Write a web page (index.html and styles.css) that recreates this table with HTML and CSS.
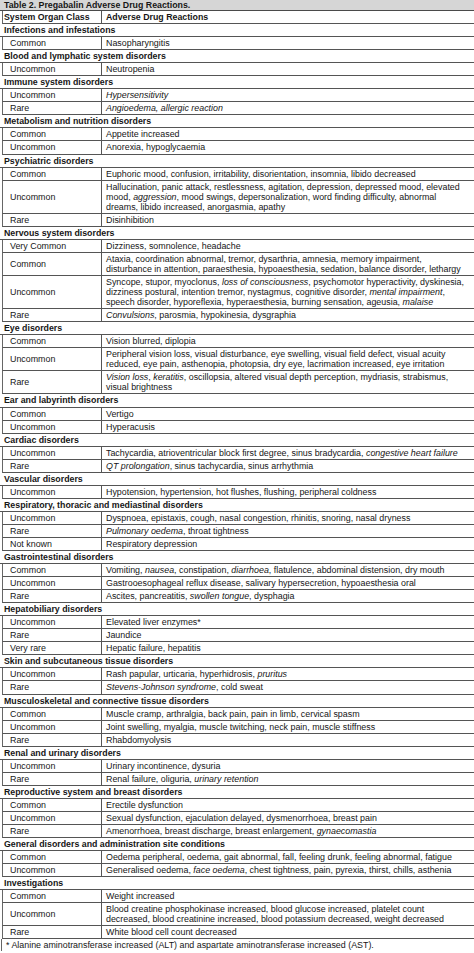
FILE: index.html
```html
<!DOCTYPE html>
<html lang="en">
<head>
<meta charset="utf-8">
<title>Table 2. Pregabalin Adverse Drug Reactions</title>
<link rel="stylesheet" href="styles.css">
</head>
<body>
<div class="table">
  <div class="title">Table 2. Pregabalin Adverse Drug Reactions.</div>
  <div class="row head"><div class="c1">System Organ Class</div><div class="c2">Adverse Drug Reactions</div></div>

  <div class="cat">Infections and infestations</div>
  <div class="row"><div class="c1">Common</div><div class="c2">Nasopharyngitis</div></div>

  <div class="cat">Blood and lymphatic system disorders</div>
  <div class="row"><div class="c1">Uncommon</div><div class="c2">Neutropenia</div></div>

  <div class="cat">Immune system disorders</div>
  <div class="row"><div class="c1">Uncommon</div><div class="c2"><i>Hypersensitivity</i></div></div>
  <div class="row"><div class="c1">Rare</div><div class="c2"><i>Angioedema, allergic reaction</i></div></div>

  <div class="cat">Metabolism and nutrition disorders</div>
  <div class="row"><div class="c1">Common</div><div class="c2">Appetite increased</div></div>
  <div class="row"><div class="c1">Uncommon</div><div class="c2">Anorexia, hypoglycaemia</div></div>

  <div class="cat">Psychiatric disorders</div>
  <div class="row"><div class="c1">Common</div><div class="c2">Euphoric mood, confusion, irritability, disorientation, insomnia, libido decreased</div></div>
  <div class="row"><div class="c1">Uncommon</div><div class="c2">Hallucination, panic attack, restlessness, agitation, depression, depressed mood, elevated<br>mood, <i>aggression</i>, mood swings, depersonalization, word finding difficulty, abnormal<br>dreams, libido increased, anorgasmia, apathy</div></div>
  <div class="row"><div class="c1">Rare</div><div class="c2">Disinhibition</div></div>

  <div class="cat">Nervous system disorders</div>
  <div class="row"><div class="c1">Very Common</div><div class="c2">Dizziness, somnolence, headache</div></div>
  <div class="row"><div class="c1">Common</div><div class="c2">Ataxia, coordination abnormal, tremor, dysarthria, amnesia, memory impairment,<br>disturbance in attention, paraesthesia, hypoaesthesia, sedation, balance disorder, lethargy</div></div>
  <div class="row"><div class="c1">Uncommon</div><div class="c2">Syncope, stupor, myoclonus, <i>loss of consciousness</i>, psychomotor hyperactivity, dyskinesia,<br>dizziness postural, intention tremor, nystagmus, cognitive disorder, <i>mental impairment</i>,<br>speech disorder, hyporeflexia, hyperaesthesia, burning sensation, ageusia, <i>malaise</i></div></div>
  <div class="row"><div class="c1">Rare</div><div class="c2"><i>Convulsions</i>, parosmia, hypokinesia, dysgraphia</div></div>

  <div class="cat">Eye disorders</div>
  <div class="row"><div class="c1">Common</div><div class="c2">Vision blurred, diplopia</div></div>
  <div class="row"><div class="c1">Uncommon</div><div class="c2">Peripheral vision loss, visual disturbance, eye swelling, visual field defect, visual acuity<br>reduced, eye pain, asthenopia, photopsia, dry eye, lacrimation increased, eye irritation</div></div>
  <div class="row"><div class="c1">Rare</div><div class="c2"><i>Vision loss</i>, <i>keratitis</i>, oscillopsia, altered visual depth perception, mydriasis, strabismus,<br>visual brightness</div></div>

  <div class="cat">Ear and labyrinth disorders</div>
  <div class="row"><div class="c1">Common</div><div class="c2">Vertigo</div></div>
  <div class="row"><div class="c1">Uncommon</div><div class="c2">Hyperacusis</div></div>

  <div class="cat">Cardiac disorders</div>
  <div class="row"><div class="c1">Uncommon</div><div class="c2">Tachycardia, atrioventricular block first degree, sinus bradycardia, <i>congestive heart failure</i></div></div>
  <div class="row"><div class="c1">Rare</div><div class="c2"><i>QT prolongation</i>, sinus tachycardia, sinus arrhythmia</div></div>

  <div class="cat">Vascular disorders</div>
  <div class="row"><div class="c1">Uncommon</div><div class="c2">Hypotension, hypertension, hot flushes, flushing, peripheral coldness</div></div>

  <div class="cat">Respiratory, thoracic and mediastinal disorders</div>
  <div class="row"><div class="c1">Uncommon</div><div class="c2">Dyspnoea, epistaxis, cough, nasal congestion, rhinitis, snoring, nasal dryness</div></div>
  <div class="row"><div class="c1">Rare</div><div class="c2"><i>Pulmonary oedema</i>, throat tightness</div></div>
  <div class="row"><div class="c1">Not known</div><div class="c2">Respiratory depression</div></div>

  <div class="cat">Gastrointestinal disorders</div>
  <div class="row"><div class="c1">Common</div><div class="c2">Vomiting, <i>nausea</i>, constipation, <i>diarrhoea</i>, flatulence, abdominal distension, dry mouth</div></div>
  <div class="row"><div class="c1">Uncommon</div><div class="c2">Gastrooesophageal reflux disease, salivary hypersecretion, hypoaesthesia oral</div></div>
  <div class="row"><div class="c1">Rare</div><div class="c2">Ascites, pancreatitis, <i>swollen tongue</i>, dysphagia</div></div>

  <div class="cat">Hepatobiliary disorders</div>
  <div class="row"><div class="c1">Uncommon</div><div class="c2">Elevated liver enzymes*</div></div>
  <div class="row"><div class="c1">Rare</div><div class="c2">Jaundice</div></div>
  <div class="row"><div class="c1">Very rare</div><div class="c2">Hepatic failure, hepatitis</div></div>

  <div class="cat">Skin and subcutaneous tissue disorders</div>
  <div class="row"><div class="c1">Uncommon</div><div class="c2">Rash papular, urticaria, hyperhidrosis, <i>pruritus</i></div></div>
  <div class="row"><div class="c1">Rare</div><div class="c2"><i>Stevens-Johnson syndrome</i>, cold sweat</div></div>

  <div class="cat">Musculoskeletal and connective tissue disorders</div>
  <div class="row"><div class="c1">Common</div><div class="c2">Muscle cramp, arthralgia, back pain, pain in limb, cervical spasm</div></div>
  <div class="row"><div class="c1">Uncommon</div><div class="c2">Joint swelling, myalgia, muscle twitching, neck pain, muscle stiffness</div></div>
  <div class="row"><div class="c1">Rare</div><div class="c2">Rhabdomyolysis</div></div>

  <div class="cat">Renal and urinary disorders</div>
  <div class="row"><div class="c1">Uncommon</div><div class="c2">Urinary incontinence, dysuria</div></div>
  <div class="row"><div class="c1">Rare</div><div class="c2">Renal failure, oliguria, <i>urinary retention</i></div></div>

  <div class="cat">Reproductive system and breast disorders</div>
  <div class="row"><div class="c1">Common</div><div class="c2">Erectile dysfunction</div></div>
  <div class="row"><div class="c1">Uncommon</div><div class="c2">Sexual dysfunction, ejaculation delayed, dysmenorrhoea, breast pain</div></div>
  <div class="row"><div class="c1">Rare</div><div class="c2">Amenorrhoea, breast discharge, breast enlargement, <i>gynaecomastia</i></div></div>

  <div class="cat">General disorders and administration site conditions</div>
  <div class="row"><div class="c1">Common</div><div class="c2">Oedema peripheral, oedema, gait abnormal, fall, feeling drunk, feeling abnormal, fatigue</div></div>
  <div class="row"><div class="c1">Uncommon</div><div class="c2">Generalised oedema, <i>face oedema</i>, chest tightness, pain, pyrexia, thirst, chills, asthenia</div></div>

  <div class="cat">Investigations</div>
  <div class="row"><div class="c1">Common</div><div class="c2">Weight increased</div></div>
  <div class="row"><div class="c1">Uncommon</div><div class="c2">Blood creatine phosphokinase increased, blood glucose increased, platelet count<br>decreased, blood creatinine increased, blood potassium decreased, weight decreased</div></div>
  <div class="row"><div class="c1">Rare</div><div class="c2">White blood cell count decreased</div></div>

  <div class="foot">* Alanine aminotransferase increased (ALT) and aspartate aminotransferase increased (AST).</div>
</div>
</body>
</html>
```

FILE: styles.css
```css
* {
  box-sizing: border-box;
}

body {
  margin: 0;
  background: #ffffff;
  color: #161616;
  font-family: "Liberation Sans", Arial, sans-serif;
  font-size: 8.9px;
  line-height: 10.05px;
}

.table {
  width: 474px;
}

.title {
  background: #d6d6d6;
  font-weight: bold;
  font-size: 8.8px;
  height: 11px;
  padding: 0 4px;
  line-height: 10px;
  border-bottom: 1px solid #4a4a4a;
  white-space: nowrap;
}

.cat {
  font-weight: bold;
  font-size: 8.8px;
  padding: 1px 4px;
  border-bottom: 1px solid #555555;
  white-space: nowrap;
}

.row {
  display: grid;
  grid-template-columns: 99px 1fr;
  margin-left: 2px;
  border-left: 1px solid #666666;
  border-bottom: 1px solid #555555;
}

.c1 {
  display: flex;
  align-items: center;
  padding: 1px 0 1px 7px;
  border-right: 1px solid #555555;
  white-space: nowrap;
}

.c2 {
  padding: 1px 4px;
  white-space: nowrap;
}

.head {
  font-weight: bold;
  font-size: 8.8px;
}

.head .c1 {
  padding-left: 1px;
}

.foot {
  padding: 1px 4px;
  margin-left: 1px;
  border-left: 1px solid #666666;
  white-space: nowrap;
}
```
